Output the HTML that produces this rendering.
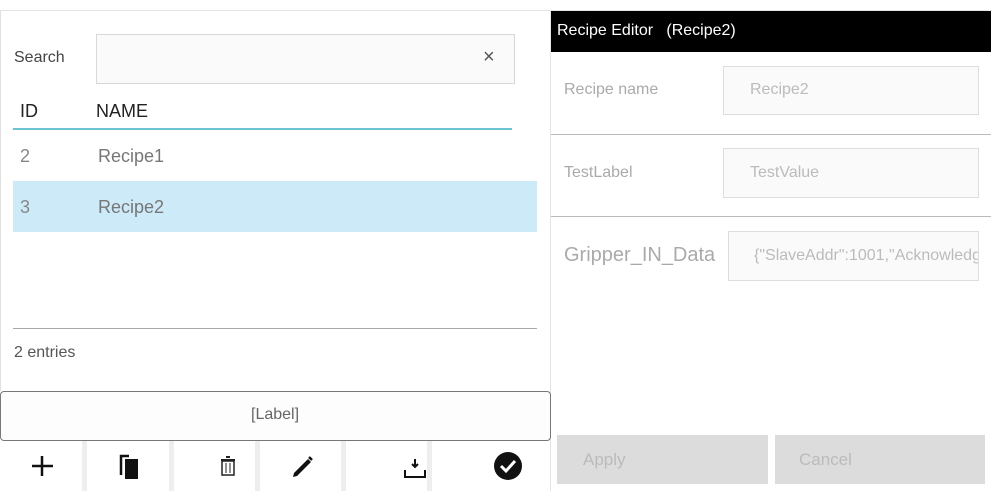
<!DOCTYPE html>
<html><head><meta charset="utf-8"><style>
*{margin:0;padding:0;box-sizing:border-box}
body{width:1000px;height:491px;background:#fff;font-family:"Liberation Sans",sans-serif;position:relative;overflow:hidden}
.a{position:absolute}
.t{position:absolute;white-space:nowrap}
</style></head><body>
<div class="a" style="left:0;top:10px;width:992px;height:1px;background:#e4e4e4"></div>
<div class="a" style="left:0;top:10px;width:1px;height:381px;background:#e0e0e0"></div>
<div class="a" style="left:550px;top:10px;width:1px;height:481px;background:#e4e4e4"></div>
<div class="t" style="left:14px;top:49px;font-size:16px;color:#444">Search</div>
<div class="a" style="left:96px;top:34px;width:419px;height:50px;border:1px solid #d8d8d8;background:#fafafa"></div>
<div class="t" style="left:483px;top:46px;font-size:20px;color:#555">×</div>
<div class="t" style="left:20px;top:101px;font-size:18px;color:#222">ID</div>
<div class="t" style="left:96px;top:101px;font-size:18px;color:#222">NAME</div>
<div class="a" style="left:13px;top:128px;width:499px;height:2px;background:#6cc3d2"></div>
<div class="t" style="left:20px;top:146px;font-size:18px;color:#888">2</div>
<div class="t" style="left:98px;top:146px;font-size:18px;color:#777">Recipe1</div>
<div class="a" style="left:13px;top:181px;width:524px;height:51px;background:#cdeaf8"></div>
<div class="t" style="left:20px;top:197px;font-size:18px;color:#888">3</div>
<div class="t" style="left:98px;top:197px;font-size:18px;color:#777">Recipe2</div>
<div class="a" style="left:13px;top:328px;width:524px;height:1px;background:#aaa"></div>
<div class="t" style="left:14px;top:344px;font-size:16px;color:#555">2 entries</div>
<div class="a" style="left:0;top:391px;width:551px;height:50px;border:1px solid #777;border-radius:4px;background:#fdfdfd"></div>
<div class="t" style="left:251px;top:406px;font-size:16px;color:#666">[Label]</div>
<div class="a" style="left:82px;top:441px;width:5px;height:50px;background:#eee"></div>
<div class="a" style="left:169px;top:441px;width:5px;height:50px;background:#eee"></div>
<div class="a" style="left:255px;top:441px;width:5px;height:50px;background:#eee"></div>
<div class="a" style="left:341px;top:441px;width:5px;height:50px;background:#eee"></div>
<div class="a" style="left:427px;top:441px;width:5px;height:50px;background:#eee"></div>
<svg class="a" style="left:0;top:441px" width="550" height="50">
<path d="M42 15v20M32 25h21" stroke="#111" stroke-width="2.5"/>
<path d="M129 15h-8v19" stroke="#111" stroke-width="2.5" fill="none"/><rect x="125" y="18" width="13" height="20" fill="#111"/>
<rect x="221" y="18" width="14" height="2" fill="#222"/><rect x="226" y="15" width="4" height="2" fill="#222"/><path d="M222 20h12v14h-12z" fill="none" stroke="#222" stroke-width="1.5"/><path d="M226 22v10M230 22v10" stroke="#222"/>
<path d="M313 36l4-1 14-14-3-3-14 14z" fill="#111" transform="translate(-20,0)"/><path d="M309 16l3 3" stroke="#111" stroke-width="2.5"/>
<path d="M405 29v7h20v-7" fill="none" stroke="#111" stroke-width="2"/><path d="M415 18v7M412 23l3 3 3-3" stroke="#111" stroke-width="2" fill="none"/>
<circle cx="508" cy="25" r="14" fill="#111"/><path d="M501 25l5 5 9-10" stroke="#fff" stroke-width="3" fill="none"/>
</svg>
<div class="a" style="left:551px;top:11px;width:440px;height:41px;background:#000"></div>
<div class="t" style="left:557px;top:22px;font-size:16px;color:#fff">Recipe Editor&nbsp;&nbsp; (Recipe2)</div>
<div class="t" style="left:564px;top:81px;font-size:16px;color:#aaa">Recipe name</div>
<div class="a" style="left:723px;top:66px;width:256px;height:49px;border:1px solid #ddd;background:#fafafa"></div>
<div class="t" style="left:750px;top:81px;font-size:16px;color:#bbb">Recipe2</div>
<div class="a" style="left:551px;top:134px;width:440px;height:1px;background:#bbb"></div>
<div class="t" style="left:564px;top:164px;font-size:16px;color:#aaa">TestLabel</div>
<div class="a" style="left:723px;top:148px;width:256px;height:50px;border:1px solid #ddd;background:#fafafa"></div>
<div class="t" style="left:750px;top:164px;font-size:16px;color:#bbb">TestValue</div>
<div class="a" style="left:551px;top:216px;width:440px;height:1px;background:#bbb"></div>
<div class="t" style="left:564px;top:244px;font-size:20px;color:#aaa">Gripper_IN_Data</div>
<div class="a" style="left:728px;top:231px;width:251px;height:50px;border:1px solid #ddd;background:#fafafa;overflow:hidden"><div class="t" style="left:25px;top:15px;font-size:16px;color:#bbb">{"SlaveAddr":1001,"Acknowledge</div></div>
<div class="a" style="left:557px;top:435px;width:211px;height:49px;background:#dcdcdc"></div>
<div class="t" style="left:583px;top:450px;font-size:17px;color:#bbb">Apply</div>
<div class="a" style="left:775px;top:435px;width:210px;height:49px;background:#dcdcdc"></div>
<div class="t" style="left:799px;top:450px;font-size:17px;color:#bbb">Cancel</div>
</body></html>
